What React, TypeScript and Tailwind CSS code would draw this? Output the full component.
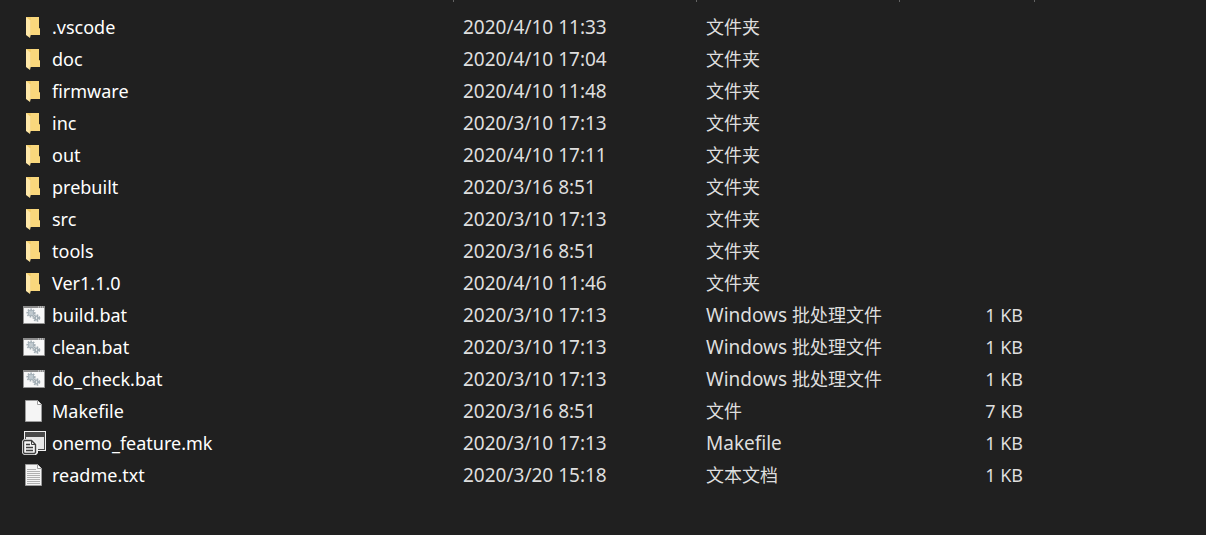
type Kind = "folder" | "bat" | "blank" | "mk" | "txt";

interface Entry {
  name: string;
  date: string;
  kind: Kind;
  size?: string;
}

const TYPE_LABELS: Record<Kind, { latin?: string; cjk?: string }> = {
  folder: { cjk: "文件夹" },
  bat: { latin: "Windows ", cjk: "批处理文件" },
  blank: { cjk: "文件" },
  mk: { latin: "Makefile" },
  txt: { cjk: "文本文档" },
};

const ENTRIES: Entry[] = [
  { name: ".vscode", date: "2020/4/10 11:33", kind: "folder" },
  { name: "doc", date: "2020/4/10 17:04", kind: "folder" },
  { name: "firmware", date: "2020/4/10 11:48", kind: "folder" },
  { name: "inc", date: "2020/3/10 17:13", kind: "folder" },
  { name: "out", date: "2020/4/10 17:11", kind: "folder" },
  { name: "prebuilt", date: "2020/3/16 8:51", kind: "folder" },
  { name: "src", date: "2020/3/10 17:13", kind: "folder" },
  { name: "tools", date: "2020/3/16 8:51", kind: "folder" },
  { name: "Ver1.1.0", date: "2020/4/10 11:46", kind: "folder" },
  { name: "build.bat", date: "2020/3/10 17:13", kind: "bat", size: "1 KB" },
  { name: "clean.bat", date: "2020/3/10 17:13", kind: "bat", size: "1 KB" },
  { name: "do_check.bat", date: "2020/3/10 17:13", kind: "bat", size: "1 KB" },
  { name: "Makefile", date: "2020/3/16 8:51", kind: "blank", size: "7 KB" },
  { name: "onemo_feature.mk", date: "2020/3/10 17:13", kind: "mk", size: "1 KB" },
  { name: "readme.txt", date: "2020/3/20 15:18", kind: "txt", size: "1 KB" },
];

function Gear({ cx, cy, r }: { cx: number; cy: number; r: number }) {
  return (
    <g fill="none">
      <circle
        cx={cx}
        cy={cy}
        r={r}
        stroke="#a3aeb5"
        strokeWidth="1.6"
        strokeDasharray="1.6 1.2"
      />
      <circle cx={cx} cy={cy} r={r - 1} fill="#d3dde3" stroke="#98a5ad" strokeWidth=".9" />
      <circle cx={cx} cy={cy} r="1.2" fill="#fff" stroke="#87959e" strokeWidth=".7" />
    </g>
  );
}

function Page({ lines }: { lines?: boolean }) {
  return (
    <>
      <path d="M3.5 1.5h12l4 4v17h-16z" fill="#f5f5f5" stroke="#9c9c9c" />
      <path d="M15.5 1.5v4h4" fill="#fff" stroke="#9c9c9c" />
      {lines && (
        <path
          d="M5 6.5h9M5 8.5h13M5 10.5h13M5 12.5h13M5 14.5h13M5 16.5h13M5 18.5h13M5 20.5h13"
          stroke="#b0b0b0"
        />
      )}
    </>
  );
}

function FileIcon({ kind }: { kind: Kind }) {
  return (
    <svg viewBox="0 0 24 24" className="size-6 shrink-0" aria-hidden="true">
      {kind === "folder" && (
        <>
          <path d="M4 2h13v11l1 1v6H7z" fill="#f5cf6b" />
          <path d="M9 2h8v11l1 1v6H9z" fill="#f9d77c" />
          <path d="M4 2l5 4v12l-1 5-4-3z" fill="#ffe8a8" />
          <path d="M8.5 6v12l-1 4" fill="none" stroke="#efc968" strokeWidth=".5" />
        </>
      )}
      {kind === "bat" && (
        <>
          <path d="M1.5 3.5h21v17h-21z" fill="#f8f8f8" stroke="#939393" />
          <path d="M1 3h22v2H1z" fill="#8c8c8c" />
          <path d="M16 4h1M18 4h1M20 4h1" stroke="#e4e4e4" />
          <Gear cx={9} cy={10} r={3.8} />
          <Gear cx={14.5} cy={15} r={3} />
        </>
      )}
      {kind === "blank" && <Page />}
      {kind === "txt" && <Page lines />}
      {kind === "mk" && (
        <>
          <path d="M2 0h22v20H2z" fill="#f1f1f1" />
          <path d="M3 1h20v18H3z" fill="#4a4a4a" />
          <path d="M4 6h18v12H4z" fill="#e9e9e9" />
          <path d="M2 8h9l5 5v9l-2 2H2l-2-2V10z" fill="#f1f1f1" />
          <path d="M2.5 9.5h7l4 4v8l-1 1h-10l-1-1v-11z" fill="#f5f5f5" stroke="#3f3f3f" strokeWidth="1.4" />
          <path d="M9.5 9.5v4h4" fill="none" stroke="#3f3f3f" />
          <path d="M4 13.5h4M4 16.5h7M4 19.5h7" stroke="#3f3f3f" strokeWidth="1.4" />
        </>
      )}
    </svg>
  );
}

function HeaderEdge() {
  return (
    <th className="h-[11px] p-0 align-top">
      <div className="h-0.5 border-r border-[#636363]" />
    </th>
  );
}

export default function App() {
  return (
    <main className="min-h-screen bg-[#202020] font-['Noto_Sans','Noto_Sans_CJK_SC',sans-serif] text-[18px] leading-8 text-[#dedede]">
      <table className="w-full table-fixed border-collapse text-left whitespace-nowrap">
        <colgroup>
          <col className="w-[454px]" />
          <col className="w-[243px]" />
          <col className="w-[203px]" />
          <col className="w-[135px]" />
          <col />
        </colgroup>
        <thead>
          <tr>
            <HeaderEdge />
            <HeaderEdge />
            <HeaderEdge />
            <HeaderEdge />
            <th className="p-0" />
          </tr>
        </thead>
        <tbody>
          {ENTRIES.map((e) => {
            const type = TYPE_LABELS[e.kind];
            return (
              <tr key={e.name} className="h-8">
                <td className="p-0 pl-[22px] text-white">
                  <div className="flex h-8 items-center gap-1.5">
                    <FileIcon kind={e.kind} />
                    <span>{e.name}</span>
                  </div>
                </td>
                <td className="p-0 pl-[9px] text-[19px]">
                  <div className="h-8">{e.date}</div>
                </td>
                <td className="p-0 pl-[9px]">
                  <div className="h-8">
                    <span className="text-[19px]">{type.latin}</span>
                    {type.cjk}
                  </div>
                </td>
                <td className="p-0 pr-3 text-right">
                  <div className="h-8">{e.size}</div>
                </td>
                <td className="p-0" />
              </tr>
            );
          })}
        </tbody>
      </table>
    </main>
  );
}
